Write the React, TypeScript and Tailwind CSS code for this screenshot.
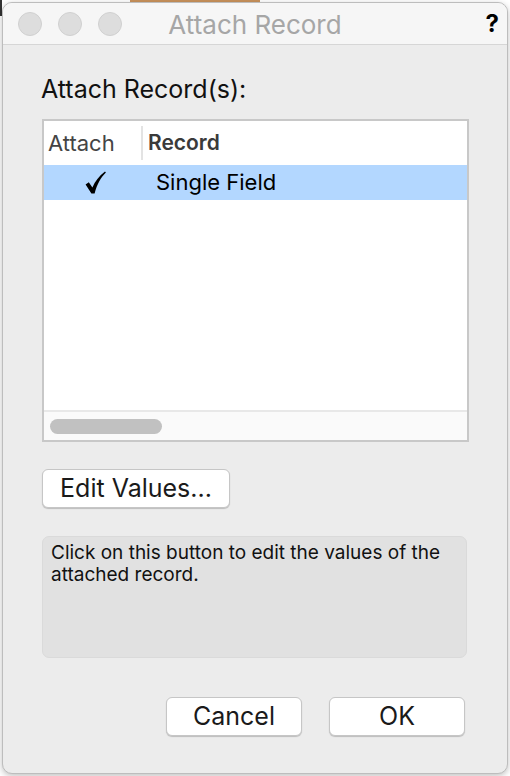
import React from "react";

function Check() {
  return (
    <svg width="21" height="23" viewBox="0 0 21 23" className="block">
      <path
        d="M0.6 13.4 L3.8 11.2 L7.4 16.4 C10 10.4 14 4.8 20 0.4 L20.9 1.6 C15.8 6.6 12.2 13 9.6 22.4 L6.4 22.4 Z"
        fill="#000"
      />
    </svg>
  );
}

export default function App() {
  return (
    <div className="w-[510px] h-[776px] bg-white relative overflow-hidden" style={{ fontFamily: "Inter, 'Liberation Sans', sans-serif" }}>
      <div className="absolute left-0 top-0 w-[2px] h-[16px] bg-[#333]" />
      <div className="absolute left-[130px] top-0 w-[130px] h-[4px] bg-[#c9925c]" />
      <div className="absolute left-[2px] top-[2px] w-[506px] h-[772px] rounded-[10px] border border-[#bdbdbd] bg-[#ececec] overflow-hidden flex flex-col shadow-[0_2px_6px_rgba(0,0,0,0.25)]">
        <div className="h-[42px] bg-[#f6f6f6] border-b border-[#d6d6d6] flex items-center relative shrink-0">
          <div className="flex gap-[16px] pl-[15px]">
            <div className="w-[24px] h-[24px] rounded-full bg-[#dddddd] border border-[#d0d0d0]" />
            <div className="w-[24px] h-[24px] rounded-full bg-[#dddddd] border border-[#d0d0d0]" />
            <div className="w-[24px] h-[24px] rounded-full bg-[#dddddd] border border-[#d0d0d0]" />
          </div>
          <div className="absolute left-0 right-0 top-0 h-full flex items-center justify-center text-[26px] text-[#a6a6a6] pointer-events-none">
            <span className="mt-[1px]">Attach Record</span>
          </div>
          <div className="ml-auto pr-[8px] text-[24px] font-bold text-black">?</div>
        </div>
        <div className="flex-1 flex flex-col px-[39px]">
          <div className="mt-[30px] text-[25px] text-[#111] leading-[28px] -ml-[1px]">Attach Record(s):</div>
          <div className="mt-[16px] w-[427px] h-[323px] border-2 border-[#c8c8c8] bg-white flex flex-col">
            <div className="h-[44px] flex items-center text-[22px] text-[#444] shrink-0">
              <div className="w-[99px] pl-[4px] h-[34px] flex items-center border-r-2 border-[#e3e3e3]">Attach</div>
              <div className="pl-[5px] font-semibold text-[#3a3a3a] text-[21px]">Record</div>
            </div>
            <div className="h-[35px] bg-[#b3d7ff] flex items-center text-[22px] text-black shrink-0">
              <div className="w-[99px] flex justify-center pl-[4px]">
                <Check />
              </div>
              <div className="pl-[13px]">Single Field</div>
            </div>
            <div className="flex-1" />
            <div className="h-[30px] bg-[#fafafa] border-t-2 border-[#e8e8e8] flex items-center px-[6px] shrink-0">
              <div className="w-[112px] h-[15px] rounded-full bg-[#c1c1c1]" />
            </div>
          </div>
          <button className="mt-[27px] w-[188px] h-[39px] rounded-[6px] bg-white border border-[#c6c6c6] shadow-[0_1px_1px_rgba(0,0,0,0.2)] text-[25px] text-[#1a1a1a] flex items-center justify-center">Edit Values...</button>
          <div className="mt-[28px] w-[425px] h-[122px] rounded-[7px] bg-[#e1e1e1] border border-[#dadada] px-[8px] pt-[5px] text-[19px] leading-[22px] text-[#111]">
            Click on this button to edit the values of the attached record.
          </div>
          <div className="mt-[39px] flex justify-end gap-[27px] pr-[3px]">
            <button className="w-[136px] h-[39px] rounded-[6px] bg-white border border-[#c6c6c6] shadow-[0_1px_1px_rgba(0,0,0,0.2)] text-[25px] text-[#1a1a1a]">Cancel</button>
            <button className="w-[136px] h-[39px] rounded-[6px] bg-white border border-[#c6c6c6] shadow-[0_1px_1px_rgba(0,0,0,0.2)] text-[25px] text-[#1a1a1a]">OK</button>
          </div>
        </div>
      </div>
    </div>
  );
}
